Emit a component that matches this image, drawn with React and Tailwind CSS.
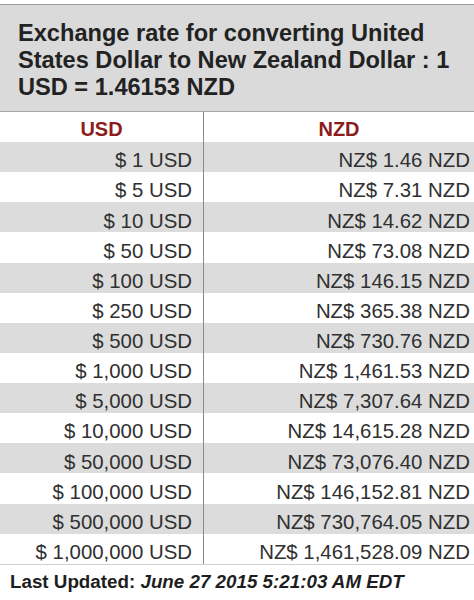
import React from "react";

const rows = [
  ["$ 1 USD", "NZ$ 1.46 NZD"],
  ["$ 5 USD", "NZ$ 7.31 NZD"],
  ["$ 10 USD", "NZ$ 14.62 NZD"],
  ["$ 50 USD", "NZ$ 73.08 NZD"],
  ["$ 100 USD", "NZ$ 146.15 NZD"],
  ["$ 250 USD", "NZ$ 365.38 NZD"],
  ["$ 500 USD", "NZ$ 730.76 NZD"],
  ["$ 1,000 USD", "NZ$ 1,461.53 NZD"],
  ["$ 5,000 USD", "NZ$ 7,307.64 NZD"],
  ["$ 10,000 USD", "NZ$ 14,615.28 NZD"],
  ["$ 50,000 USD", "NZ$ 73,076.40 NZD"],
  ["$ 100,000 USD", "NZ$ 146,152.81 NZD"],
  ["$ 500,000 USD", "NZ$ 730,764.05 NZD"],
  ["$ 1,000,000 USD", "NZ$ 1,461,528.09 NZD"],
];

export default function App() {
  return (
    <div
      className="w-[474px] h-[600px] bg-white overflow-hidden"
      style={{ fontFamily: '"Liberation Sans", Arial, Helvetica, sans-serif' }}
    >
      <div className="h-[4px]" />
      <div className="bg-[#dadada] border-t border-b border-t-[#9a9a9a] border-b-[#a8a8a8] pt-[15px] pb-[10px] pl-[18px] pr-[10px]">
        <div className="text-[23.6px] leading-[27px] font-bold text-[#222]">
          Exchange rate for converting United States Dollar to New Zealand Dollar : 1 USD = 1.46153 NZD
        </div>
      </div>
      <div className="flex h-[30px]">
        <div className="w-[204px] border-r border-[#8a8a8a] flex items-center justify-center pt-[4px]">
          <span className="text-[20px] font-bold text-[#8c1c1c]">USD</span>
        </div>
        <div className="flex-1 flex items-center justify-center pt-[4px]">
          <span className="text-[20px] font-bold text-[#8c1c1c]">NZD</span>
        </div>
      </div>
      <div className="border-b border-[#d0d0d0]">
        {rows.map(([a, b], i) => (
          <div
            key={i}
            className={
              "flex h-[30.14px] text-[20.4px] text-[#303030] " +
              (i % 2 === 0 ? "bg-[#dcdcdc]" : "bg-white")
            }
          >
            <div className="w-[204px] border-r border-[#8a8a8a] flex items-center justify-end pr-[11px] pt-[7px]">
              {a}
            </div>
            <div className="flex-1 flex items-center justify-end pr-[4px] pt-[7px]">
              {b}
            </div>
          </div>
        ))}
      </div>
      <div className="pl-[10px] pt-[3px] text-[18.8px] font-bold text-[#1e1e1e]">
        Last Updated: <span className="italic">June 27 2015 5:21:03 AM EDT</span>
      </div>
    </div>
  );
}
